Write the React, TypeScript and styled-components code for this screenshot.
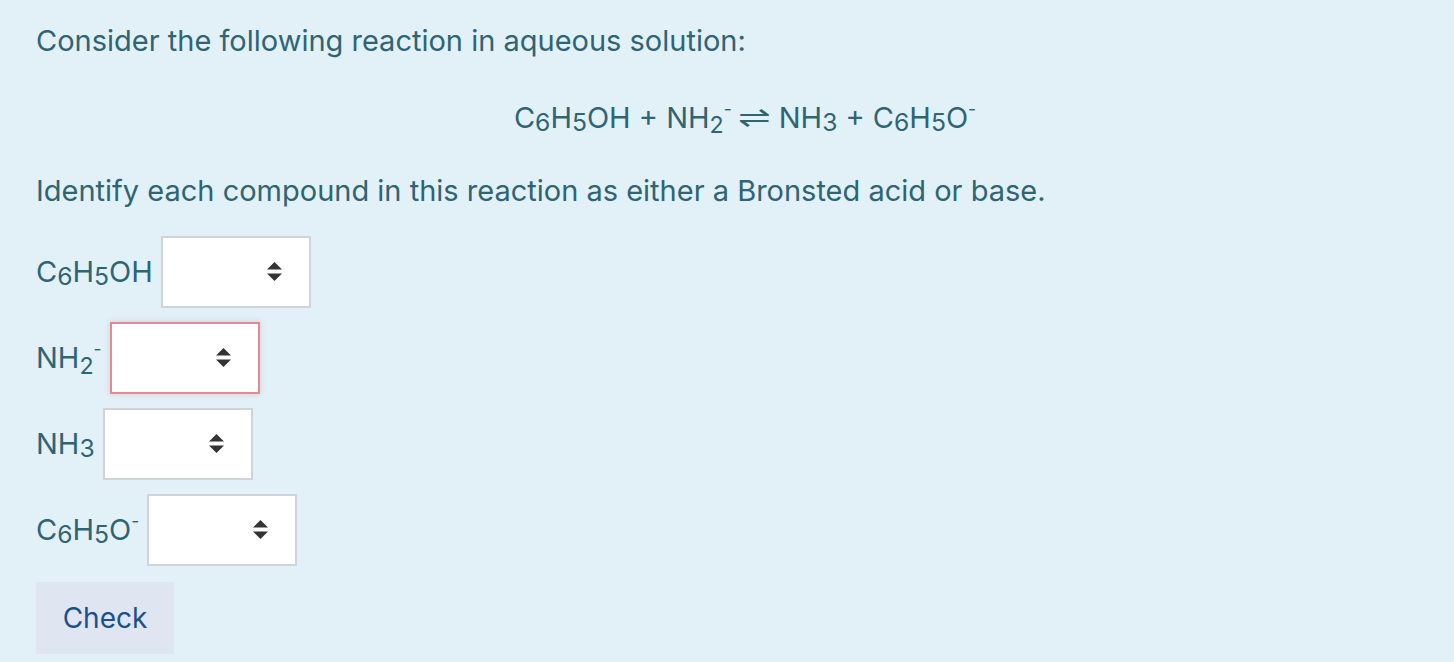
import React from "react";
import styled, { createGlobalStyle } from "styled-components";

const GlobalStyle = createGlobalStyle`
  html, body {
    margin: 0;
    padding: 0;
    background: #e2f1f8;
  }
  body {
    font-family: Inter, "Noto Sans", "Liberation Sans", sans-serif;
    color: #2f6473;
  }
`;

const Formulation = styled.div`
  padding: 20px 0 8px 36px;
  font-size: 29px;
  line-height: 42px;
`;

const Para = styled.p<{ center?: boolean; gap?: number }>`
  margin: 0 0 ${({ gap }) => (gap ?? 33)}px;
  text-align: ${({ center }) => (center ? "center" : "left")};
`;

const Sub = styled.sub<{ small?: boolean }>`
  font-size: ${({ small }) => (small ? "0.8em" : "0.85em")};
  vertical-align: ${({ small }) => (small ? "-0.25em" : "-0.14em")};
  line-height: 0;
`;

const Sup = styled.sup`
  font-size: 0.6em;
  vertical-align: 0.75em;
  line-height: 0;
`;

const Arrow = styled.span`
  display: inline-block;
  font-size: 1.05em;
  transform: scaleX(1.3);
  margin: 0 12px 0 10px;
  vertical-align: 0.02em;
`;

const Answers = styled.div`
  display: flex;
  flex-direction: column;
  gap: 14px;
`;

const Row = styled.div`
  display: flex;
  align-items: center;
  gap: 8px;
`;

const Label = styled.span`
  white-space: nowrap;
`;

const SelectBox = styled.div<{ invalid?: boolean }>`
  box-sizing: border-box;
  width: 150px;
  height: 72px;
  background: #fff;
  border: 2px solid ${({ invalid }) => (invalid ? "#e08a92" : "#ced4da")};
  box-shadow: ${({ invalid }) => (invalid ? "0 0 6px rgba(220,120,130,0.35)" : "none")};
  display: flex;
  align-items: center;
  justify-content: flex-end;
  padding-right: 26px;
`;

const CheckButton = styled.button`
  margin-top: 16px;
  width: 138px;
  height: 72px;
  border: none;
  background: #dfe5f1;
  color: #1d4f8c;
  font-family: inherit;
  font-size: 28px;
  cursor: pointer;
`;

const Spinner = () => (
  <svg width="17" height="21" viewBox="0 0 17 21">
    <path d="M8.5 1 L16 8.5 H1 Z" fill="#333" />
    <path d="M8.5 20 L16 12.5 H1 Z" fill="#333" />
  </svg>
);

const items: { label: React.ReactNode; invalid?: boolean }[] = [
  {
    label: (
      <>
        C<Sub>6</Sub>H<Sub>5</Sub>OH
      </>
    ),
  },
  {
    label: (
      <>
        NH<Sub small>2</Sub>
        <Sup>-</Sup>
      </>
    ),
    invalid: true,
  },
  {
    label: (
      <>
        NH<Sub>3</Sub>
      </>
    ),
  },
  {
    label: (
      <>
        C<Sub>6</Sub>H<Sub>5</Sub>O<Sup>-</Sup>
      </>
    ),
  },
];

export default function App() {
  return (
    <>
      <GlobalStyle />
      <Formulation>
        <Para>Consider the following reaction in aqueous solution:</Para>
        <Para center gap={31}>
          C<Sub>6</Sub>H<Sub>5</Sub>OH + NH<Sub small>2</Sub>
          <Sup>-</Sup>
          <Arrow>⇌</Arrow>NH<Sub>3</Sub> + C<Sub>6</Sub>H<Sub>5</Sub>O<Sup>-</Sup>
        </Para>
        <Para gap={24}>
          Identify each compound in this reaction as either a Bronsted acid or base.
        </Para>
        <Answers>
          {items.map((it, i) => (
            <Row key={i}>
              <Label>{it.label}</Label>
              <SelectBox invalid={it.invalid}>
                <Spinner />
              </SelectBox>
            </Row>
          ))}
        </Answers>
        <CheckButton>Check</CheckButton>
      </Formulation>
    </>
  );
}
